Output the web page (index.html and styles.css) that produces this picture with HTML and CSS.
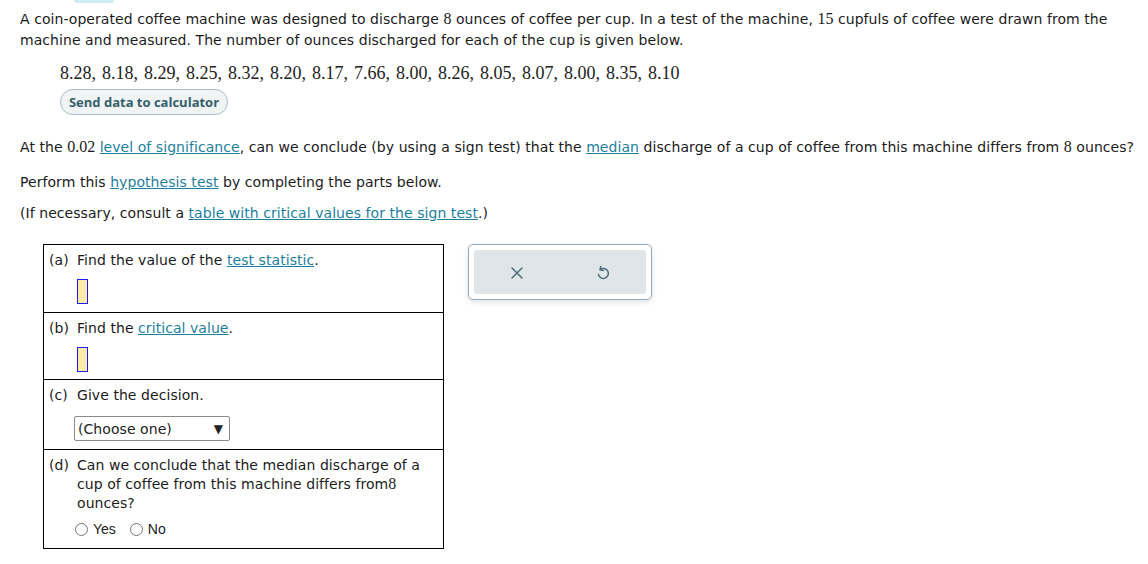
FILE: index.html
```html
<!DOCTYPE html>
<html>
<head>
<meta charset="utf-8">
<link rel="stylesheet" href="styles.css">
</head>
<body>
<div class="page">
  <div class="top-tab"></div>
  <p class="intro">A coin-operated coffee machine was designed to discharge <span class="m">8</span> ounces of coffee per cup. In a test of the machine, <span class="m">15</span> cupfuls of coffee were drawn from the machine and measured. The number of ounces discharged for each of the cup is given below.</p>
  <div class="data">8.28, 8.18, 8.29, 8.25, 8.32, 8.20, 8.17, 7.66, 8.00, 8.26, 8.05, 8.07, 8.00, 8.35, 8.10</div>
  <div class="send-row"><button class="send">Send data to calculator</button></div>
  <p class="q1">At the <span class="m">0.02</span> <a href="#">level of significance</a>, can we conclude (by using a sign test) that the <a href="#">median</a> discharge of a cup of coffee from this machine differs from <span class="m">8</span> ounces?</p>
  <p class="q2">Perform this <a href="#">hypothesis test</a> by completing the parts below.</p>
  <p class="q3">(If necessary, consult a <a href="#">table with critical values for the sign test</a>.)</p>

  <div class="work">
    <div class="parts">
      <div class="part pa">
        <div class="ptext"><span class="lbl">(a)</span><span>Find the value of the <a href="#">test statistic</a>.</span></div>
        <div class="ans"><span class="box"></span></div>
      </div>
      <div class="part pb">
        <div class="ptext"><span class="lbl">(b)</span><span>Find the <a href="#">critical value</a>.</span></div>
        <div class="ans"><span class="box"></span></div>
      </div>
      <div class="part pc">
        <div class="ptext"><span class="lbl">(c)</span><span>Give the decision.</span></div>
        <div class="ans"><div class="sel"><span>(Choose one)</span><span class="tri">▼</span></div></div>
      </div>
      <div class="part pd">
        <div class="ptext"><span class="lbl">(d)</span><span>Can we conclude that the median discharge of a cup of coffee from this machine differs from<span class="m">8</span> ounces?</span></div>
        <div class="radios"><span class="radio"></span><span class="rl">Yes</span><span class="radio"></span><span class="rl">No</span></div>
      </div>
    </div>
    <div class="tools">
      <div class="tools-in">
        <svg class="ic" width="14" height="14" viewBox="0 0 14 14"><path d="M2 2 L12 12 M12 2 L2 12" stroke="#4d6e78" stroke-width="1.5" fill="none" stroke-linecap="round"/></svg>
        <svg class="ic" width="16" height="16" viewBox="0 0 16 16"><path d="M5.2 4.6 A5 5 0 1 1 3.5 9.5" stroke="#4d6e78" stroke-width="1.5" fill="none" stroke-linecap="round"/><path d="M5.6 1.6 L5.2 4.8 L8.3 5.4" stroke="#4d6e78" stroke-width="1.5" fill="none" stroke-linecap="round" stroke-linejoin="round"/></svg>
      </div>
    </div>
  </div>
</div>
</body>
</html>
```
FILE: styles.css
```css
body {
  margin: 0;
  background: #fff;
  font-family: "DejaVu Sans", Verdana, sans-serif;
  font-size: 14px;
  letter-spacing: 0.06px;
  color: #1b1b1b;
}
.page {
  padding-left: 20px;
}
.top-tab {
  width: 40px;
  height: 3px;
  margin-left: 54px;
  background: #cfecf3;
  border-radius: 0 0 8px 8px;
}
p { margin: 0; }
.intro {
  margin-top: 6px;
  line-height: 21px;
  width: 1100px;
}
.m {
  font-family: "Liberation Serif", "Times New Roman", serif;
  font-size: 16px;
  line-height: 1;
  letter-spacing: 0;
}
a {
  color: #1d7f9c;
  text-decoration: underline;
}
.data {
  margin-top: 12px;
  margin-left: 40px;
  font-family: "Liberation Serif", "Times New Roman", serif;
  font-size: 18px;
  letter-spacing: 0;
  word-spacing: 1.5px;
  line-height: 20px;
  color: #222;
}
.send-row {
  margin-top: 6px;
  margin-left: 40px;
}
.send {
  font-family: "Open Sans", "Liberation Sans", sans-serif;
  font-weight: 700;
  font-size: 13px;
  letter-spacing: 0;
  color: #35606b;
  background: #f0f4f5;
  border: 1px solid #a9bcc3;
  border-radius: 13px;
  height: 26px;
  width: 168px;
  padding: 0;
}
.q1 {
  margin-top: 22px;
  line-height: 20px;
  white-space: nowrap;
}
.q2 {
  margin-top: 15px;
  line-height: 20px;
}
.q3 {
  margin-top: 11px;
  line-height: 20px;
}
.work {
  display: flex;
  align-items: flex-start;
  margin-top: 21px;
  margin-left: 23px;
  gap: 24px;
}
.parts {
  width: 399px;
  border: 1px solid #000;
}
.part {
  border-top: 1px solid #000;
  padding: 6px 5px 0 5px;
}
.part:first-child { border-top: none; }
.pa { height: 61px; }
.pb { height: 60px; }
.pc { height: 63px; }
.pd { height: 92px; }
.ptext {
  display: flex;
  line-height: 19px;
}
.lbl {
  width: 28px;
  flex: none;
}
.ans {
  margin-left: 28px;
  margin-top: 9px;
}
.box {
  display: block;
  width: 9px;
  height: 23px;
  border: 1px solid #1a1aff;
  background: #ffeaa8;
}
.pc .ans { margin-top: 11px; margin-left: 25px; }
.sel {
  border: 1px solid #8a8a8a;
  border-radius: 2px;
  display: flex;
  align-items: center;
  justify-content: space-between;
  padding: 0 6px 0 3px;
  box-sizing: border-box;
  width: 156px;
  height: 25px;
  color: #222;
}
.tri { font-size: 12px; }
.radios {
  display: flex;
  align-items: center;
  margin-left: 26px;
  margin-top: 8px;
  font-family: "Liberation Sans", Arial, sans-serif;
  font-size: 14px;
  letter-spacing: 0;
}
.radio {
  width: 11px;
  height: 11px;
  border: 1px solid #777;
  border-radius: 50%;
  margin-right: 5px;
}
.rl { margin-right: 14px; color: #222; }
.tools {
  width: 184px;
  height: 56px;
  border: 1px solid #93a9b1;
  border-radius: 5px;
  box-shadow: 0 2px 6px rgba(0,0,0,0.12);
  padding: 5px;
  box-sizing: border-box;
  display: flex;
}
.tools-in {
  flex: 1;
  background: #dfe5e8;
  border-radius: 3px;
  display: flex;
  align-items: center;
  justify-content: space-around;
  padding-top: 2px;
}
```
